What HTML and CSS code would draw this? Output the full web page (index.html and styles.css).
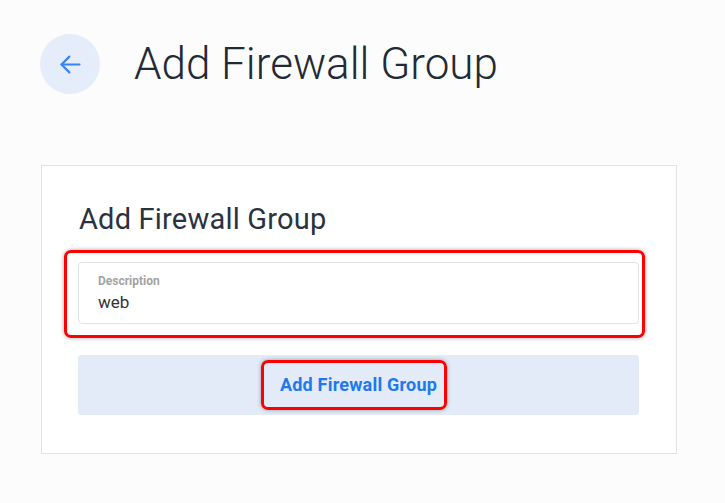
FILE: index.html
```html
<!DOCTYPE html>
<html>
<head>
<meta charset="utf-8">
<link rel="stylesheet" href="styles.css">
</head>
<body>
<div class="page">
  <header class="header">
    <div class="back">
      <svg width="27" height="27" viewBox="0 0 24 24" fill="none" stroke="#3b82f6" stroke-width="1.9" stroke-linecap="round" stroke-linejoin="round"><path d="M20 12H4"/><path d="M11 5l-7 7 7 7"/></svg>
    </div>
    <h1 class="title">Add Firewall Group</h1>
  </header>
  <section class="card">
    <h2 class="card-title">Add Firewall Group</h2>
    <div class="field-wrap">
      <div class="field">
        <div class="label">Description</div>
        <div class="value">web</div>
      </div>
      <div class="mark mark-field"></div>
    </div>
    <div class="btn">
      <span class="btn-text">Add Firewall Group<span class="mark mark-btn"></span></span>
    </div>
  </section>
</div>
</body>
</html>
```

FILE: styles.css
```css
html, body {
  margin: 0;
  padding: 0;
  background: #fcfcfc;
  font-family: Roboto, "Liberation Sans", sans-serif;
}
.page {
  padding: 34px 0 0 40px;
}
.header {
  display: flex;
  align-items: center;
  gap: 34px;
  height: 60px;
}
.back {
  width: 60px;
  height: 60px;
  border-radius: 50%;
  background: #e5edfb;
  display: flex;
  align-items: center;
  justify-content: center;
}
.title {
  margin: 0;
  font-weight: 300;
  font-size: 44px;
  letter-spacing: 0;
  color: #222a36;
  line-height: 60px;
}
.card {
  margin-top: 71px;
  margin-left: 1px;
  width: 561px;
  padding: 36px 37px 38px 36px;
  background: #fff;
  border: 1px solid #e2e2e2;
}
.card-title {
  margin: 0 0 26px 1px;
  font-weight: 400;
  font-size: 29px;
  letter-spacing: 0.2px;
  line-height: 34px;
  color: #2a3240;
}
.field-wrap {
  position: relative;
}
.field {
  border: 1px solid #e2e2e2;
  border-radius: 4px;
  height: 60px;
  padding: 0 19px;
  display: flex;
  flex-direction: column;
  justify-content: center;
}
.label {
  font-size: 12px;
  font-weight: 700;
  color: #a3a3a3;
  line-height: 16px;
}
.value {
  font-size: 17px;
  color: #333;
  line-height: 22px;
  margin-top: 2px;
}
.mark {
  position: absolute;
  border: 3px solid #f00;
  border-radius: 7px;
  box-shadow: 0 0 4px rgba(0,0,0,0.35);
  pointer-events: none;
}
.mark-field {
  left: -14px;
  right: -6px;
  top: -12px;
  bottom: -14px;
}
.btn {
  margin-top: 31px;
  height: 60px;
  background: #e3ebf9;
  border-radius: 3px;
  display: flex;
  align-items: center;
  justify-content: center;
}
.btn-text {
  position: relative;
  font-size: 18px;
  font-weight: 700;
  color: #1e78f0;
  line-height: 20px;
  letter-spacing: 0.2px;
}
.mark-btn {
  left: -19px;
  right: -10px;
  top: -15px;
  bottom: -15px;
}
```
